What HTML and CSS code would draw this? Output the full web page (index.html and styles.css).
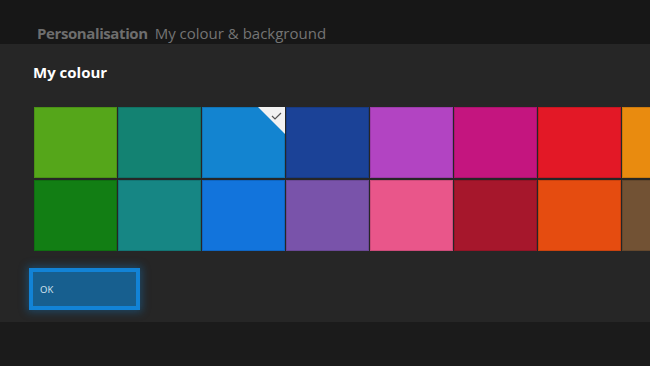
FILE: index.html
```html
<!DOCTYPE html>
<html>
<head>
<meta charset="utf-8">
<link rel="stylesheet" href="styles.css">
</head>
<body>
<div class="screen">
  <header class="topbar">
    <span class="crumb-strong">Personalisation</span>
    <span class="crumb">My colour &amp; background</span>
  </header>
  <main class="panel">
    <h1 class="panel-title">My colour</h1>
    <div class="swatches">
      <div class="row">
        <div class="tile" style="background:#55a61a"></div>
        <div class="tile" style="background:#138272"></div>
        <div class="tile selected" style="background:#1384d0">
          <svg class="check" width="27" height="27" viewBox="0 0 27 27"><polygon points="0,0 27,0 27,27" fill="#f2f2f2"/><polyline points="14,9 17,12 23,6" fill="none" stroke="#555" stroke-width="1.2"/></svg>
        </div>
        <div class="tile" style="background:#1b4297"></div>
        <div class="tile" style="background:#b244c2"></div>
        <div class="tile" style="background:#c4157f"></div>
        <div class="tile" style="background:#e31826"></div>
        <div class="tile" style="background:#e98b0f"></div>
      </div>
      <div class="row">
        <div class="tile" style="background:#127e14"></div>
        <div class="tile" style="background:#168684"></div>
        <div class="tile" style="background:#1274dc"></div>
        <div class="tile" style="background:#7953aa"></div>
        <div class="tile" style="background:#e9568a"></div>
        <div class="tile" style="background:#a6172c"></div>
        <div class="tile" style="background:#e54c10"></div>
        <div class="tile" style="background:#725234"></div>
      </div>
    </div>
    <button class="ok">OK</button>
  </main>
  <footer class="bottombar"></footer>
</div>
</body>
</html>
```
FILE: styles.css
```css
html, body {
  margin: 0;
  padding: 0;
  background: #171717;
}
.screen {
  width: 650px;
  height: 366px;
  display: flex;
  flex-direction: column;
  overflow: hidden;
  font-family: "Open Sans", "Noto Sans", sans-serif;
}
.topbar {
  height: 44px;
  flex: none;
  background: #171717;
  display: flex;
  align-items: flex-end;
  padding-left: 37px;
  box-sizing: border-box;
  overflow: hidden;
  gap: 7px;
  font-size: 15px;
  color: #6e6e6e;
  line-height: 20px;
  padding-bottom: 1px;
}
.crumb-strong {
  font-weight: 700;
  letter-spacing: -0.4px;
}
.crumb {
  font-weight: 400;
  color: #747474;
}
.panel {
  height: 278px;
  flex: none;
  background: #262626;
  box-sizing: border-box;
  padding: 17px 0 0 34px;
  display: flex;
  flex-direction: column;
  overflow: hidden;
}
.panel-title {
  margin: 0 0 0 -1px;
  font-size: 15px;
  font-weight: 700;
  color: #ffffff;
  line-height: 22px;
}
.swatches {
  margin-top: 24px;
  display: flex;
  flex-direction: column;
  gap: 2px;
}
.row {
  display: flex;
  gap: 1px;
}
.tile {
  flex: none;
  width: 83px;
  height: 71px;
  position: relative;
  box-shadow: inset 0 0 0 1px rgba(0,0,0,0.12);
}
.check {
  position: absolute;
  top: 0;
  right: 0;
  display: block;
}
.ok {
  margin: 17px 0 0 -5px;
  width: 111px;
  height: 42px;
  box-sizing: border-box;
  border: 4px solid #1283d6;
  background: #175f8f;
  color: #d8e6f0;
  font-family: "Open Sans", "Noto Sans", sans-serif;
  font-size: 9.5px;
  text-align: left;
  padding: 0 0 0 7px;
  box-shadow: 0 0 8px 2px rgba(18,131,214,0.35);
}
.bottombar {
  flex: 1;
  background: #1b1b1b;
}
```
